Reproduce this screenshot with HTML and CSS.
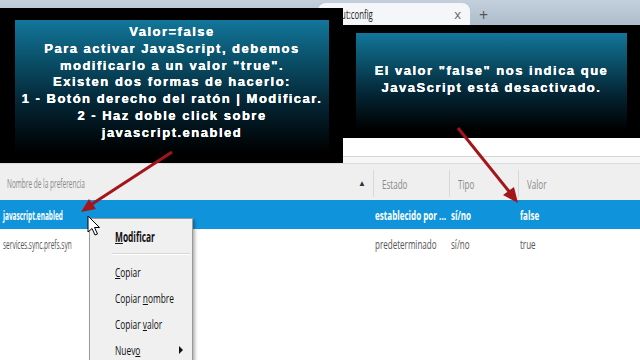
FILE: index.html
```html
<!DOCTYPE html>
<html lang="es">
<head>
    <meta charset="UTF-8">
    <meta name="viewport" content="width=device-width, initial-scale=1.0">
    <title>about:config</title>
    <link rel="stylesheet" href="styles.css">
</head>
<body>
    <div class="screen">
        <div class="titlebar">
            <div class="tab">
                <span class="tab-title"><span class="sq">about:config</span></span>
                <span class="tab-close">x</span>
            </div>
            <span class="newtab">+</span>
        </div>
        <div class="toolbar"></div>
        <div class="strip"></div>

        <div class="prefs">
            <div class="row head">
                <div class="cell name"><span class="sq">Nombre de la preferencia</span><span class="sort">&#9650;</span></div>
                <div class="cell"><span class="sq">Estado</span></div>
                <div class="cell"><span class="sq">Tipo</span></div>
                <div class="cell"><span class="sq">Valor</span></div>
            </div>
            <div class="row selected">
                <div class="cell name"><span class="sq">javascript.enabled</span></div>
                <div class="cell"><span class="sq">establecido por ...</span></div>
                <div class="cell"><span class="sq">sí/no</span></div>
                <div class="cell"><span class="sq">false</span></div>
            </div>
            <div class="row second">
                <div class="cell name"><span class="sq">services.sync.prefs.syn</span></div>
                <div class="cell"><span class="sq">predeterminado</span></div>
                <div class="cell"><span class="sq">sí/no</span></div>
                <div class="cell"><span class="sq">true</span></div>
            </div>
        </div>

        <div class="note note-left">
            <div class="note-in">
                Valor=false<br>
                Para activar JavaScript, debemos<br>
                modificarlo a un valor "true".<br>
                Existen dos formas de hacerlo:<br>
                1 - Botón derecho del ratón | Modificar.<br>
                2 - Haz doble click sobre<br>
                javascript.enabled
            </div>
        </div>
        <div class="note note-right">
            <div class="note-in">
                El valor "false" nos indica que<br>
                JavaScript está desactivado.
            </div>
        </div>

        <ul class="menu">
            <li class="bold"><span class="sq"><u>M</u>odificar</span></li>
            <li class="sep"></li>
            <li><span class="sq"><u>C</u>opiar</span></li>
            <li><span class="sq">Copiar <u>n</u>ombre</span></li>
            <li><span class="sq">Copiar <u>v</u>alor</span></li>
            <li><span class="sq">Nuev<u>o</u></span><span class="submenu"></span></li>
        </ul>

        <svg class="arrows" width="640" height="360" viewBox="0 0 640 360">
            <line x1="172" y1="152" x2="89" y2="206" stroke="#a3151b" stroke-width="3"/>
            <polygon points="81,212 96,209 89,199" fill="#a3151b"/>
            <line x1="458" y1="128" x2="512" y2="195" stroke="#a3151b" stroke-width="3"/>
            <polygon points="518,203 514,187 503,195" fill="#a3151b"/>
        </svg>

        <svg class="cursor" width="14" height="22" viewBox="0 0 14 22">
            <path d="M1 1 L1 17 L5 13.5 L8 20 L10.5 19 L7.5 12.5 L12.5 12.5 Z" fill="#fff" stroke="#000" stroke-width="1" stroke-linejoin="round"/>
        </svg>
    </div>
</body>
</html>
```

FILE: styles.css
```css
body {
    margin: 0;
    background: #fff;
}
.screen {
    position: relative;
    width: 640px;
    height: 360px;
    overflow: hidden;
    background: #fff;
    font-family: "Open Sans", "Liberation Sans", sans-serif;
}
.sq {
    display: inline-block;
    white-space: nowrap;
    transform: scaleX(.62);
    transform-origin: left center;
}

/* browser chrome */
.titlebar {
    height: 25px;
    display: flex;
    align-items: flex-end;
    padding-left: 318px;
    background: linear-gradient(#c3cfdb, #aebdcc);
}
.tab {
    width: 152px;
    height: 22px;
    display: flex;
    align-items: center;
    background: #f4f6f9;
    border-radius: 8px 8px 0 0;
    font-size: 13px;
    color: #222;
}
.tab-title {
    width: 55px;
    display: flex;
    justify-content: flex-end;
}
.tab-title .sq {
    transform: scaleX(.6);
    transform-origin: right center;
}
.tab-close {
    margin-left: auto;
    margin-right: 9px;
    color: #666;
    font-size: 13px;
}
.newtab {
    align-self: center;
    margin-left: 9px;
    margin-top: 4px;
    color: #555;
    font-size: 16px;
}
.toolbar {
    height: 131px;
    background: #fff;
    border-bottom: 1px solid #d6d6d6;
}
.strip {
    height: 6px;
    background: #f6f6f6;
    border-bottom: 1px solid #dcdcdc;
}

/* preferences table */
.row {
    display: grid;
    grid-template-columns: 373px 76px 69px 1fr;
    height: 29px;
    align-items: center;
    font-size: 13px;
    color: #555;
}
.row.second {
    height: 30px;
}
.cell {
    padding-left: 2px;
    overflow: hidden;
}
.cell.name {
    padding-left: 3px;
}
.cell.name .sq {
    transform: scaleX(.5);
}
.head {
    height: 36px;
    background: #efefef;
    color: #8a8a8a;
    align-items: stretch;
}
.head .cell {
    display: flex;
    align-items: center;
    padding-left: 8px;
    padding-top: 1px;
}
.head .cell + .cell {
    border-left: 1px solid #d8d8d8;
    margin: 6px 0 3px;
}
.head .cell.name {
    padding-left: 7px;
}
.sort {
    margin-left: auto;
    margin-right: 7px;
    font-size: 8px;
    color: #333;
}
.selected {
    background: #0f94db;
    color: #fff;
    font-weight: 700;
}

/* annotation boxes */
.note {
    position: absolute;
    background: #000;
    box-sizing: border-box;
}
.note-in {
    height: 100%;
    box-sizing: border-box;
    background: linear-gradient(#12769a, #0a5069 30%, #042636 62%, #000 100%);
    color: #fff;
    font-family: "Liberation Sans", Arial, sans-serif;
    font-weight: 700;
    font-size: 13px;
    letter-spacing: 1.5px;
    text-align: center;
    white-space: nowrap;
    text-shadow: 0 0 .5px #fff, 0 0 .5px #fff;
}
.note-left {
    left: 0;
    top: 8px;
    width: 343px;
    height: 155px;
    padding: 12px 14px 11px 15px;
}
.note-left .note-in {
    padding-top: 4px;
    line-height: 16.8px;
}
.note-right {
    left: 343px;
    top: 25px;
    width: 297px;
    height: 113px;
    padding: 8px 13px 8px 13px;
}
.note-right .note-in {
    display: flex;
    align-items: center;
    justify-content: center;
    padding-bottom: 6px;
    line-height: 17px;
}

/* context menu */
.menu {
    position: absolute;
    left: 89px;
    top: 218px;
    width: 104px;
    height: 150px;
    margin: 0;
    padding: 5px 2px 0;
    list-style: none;
    box-sizing: border-box;
    background: #f0f0f0;
    border: 1px solid #9a9a9a;
    box-shadow: 2px 2px 3px rgba(0, 0, 0, .3);
    font-size: 13.5px;
    color: #111;
}
.menu li {
    height: 26px;
    display: flex;
    align-items: center;
    padding-left: 23px;
}
.menu .bold {
    font-weight: 700;
}
.menu .sep {
    height: 0;
    margin: 3px 0 4px 20px;
    padding: 0;
    border-top: 1px solid #d7d7d7;
    border-bottom: 1px solid #fff;
}
.submenu {
    margin-left: auto;
    margin-right: 7px;
    border-left: 4px solid #111;
    border-top: 4px solid transparent;
    border-bottom: 4px solid transparent;
}

.arrows {
    position: absolute;
    left: 0;
    top: 0;
    pointer-events: none;
}
.cursor {
    position: absolute;
    left: 87px;
    top: 215px;
}
```
